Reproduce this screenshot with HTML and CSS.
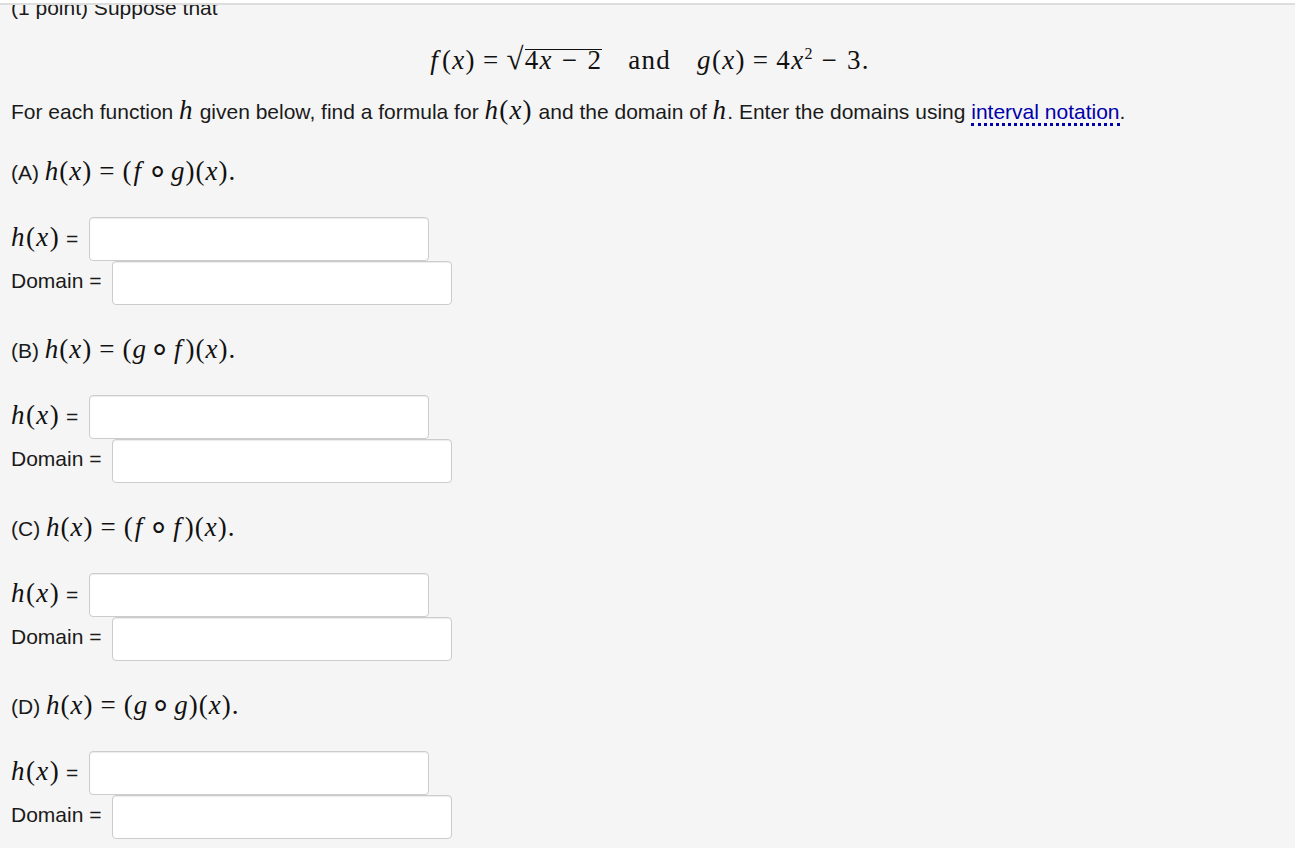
FILE: index.html
```html
<!DOCTYPE html>
<html lang="en">
<head>
    <meta charset="UTF-8">
    <title>Problem</title>
    <link rel="stylesheet" href="styles.css">
</head>
<body>
<div class="problem">
    <p class="intro">(1 point) Suppose that</p>
    <p class="display">
        <span class="math"><i class="f">f</i>(<i>x</i>)<span class="rel">=</span><span class="root"><span class="surd">√</span><span class="radicand">4<i>x</i><span class="bin">−</span>2</span></span></span>
        <span class="math">and</span>
        <span class="math"><i>g</i>(<i>x</i>)<span class="rel">=</span>4<i>x</i><sup>2</sup><span class="bin">−</span>3.</span>
    </p>
    <p class="task">For each function <span class="math"><i>h</i></span> given below, find a formula for <span class="math"><i>h</i>(<i>x</i>)</span> and the domain of <span class="math"><i>h</i></span>. Enter the domains using <a class="knowl" href="#">interval notation</a>.</p>

    <div class="part">
        <p class="question">(A) <span class="math"><i>h</i>(<i>x</i>)<span class="rel">=</span>(<i class="f">f</i><span class="compose">∘</span><i>g</i>)(<i>x</i>).</span></p>
        <div class="answer"><span class="math"><i>h</i>(<i>x</i>)</span> = <input class="field" type="text"></div>
        <div class="answer">Domain = <input class="field" type="text"></div>
    </div>
    <div class="part">
        <p class="question">(B) <span class="math"><i>h</i>(<i>x</i>)<span class="rel">=</span>(<i>g</i><span class="compose">∘</span><i class="f">f</i>)(<i>x</i>).</span></p>
        <div class="answer"><span class="math"><i>h</i>(<i>x</i>)</span> = <input class="field" type="text"></div>
        <div class="answer">Domain = <input class="field" type="text"></div>
    </div>
    <div class="part">
        <p class="question">(C) <span class="math"><i>h</i>(<i>x</i>)<span class="rel">=</span>(<i class="f">f</i><span class="compose">∘</span><i class="f">f</i>)(<i>x</i>).</span></p>
        <div class="answer"><span class="math"><i>h</i>(<i>x</i>)</span> = <input class="field" type="text"></div>
        <div class="answer">Domain = <input class="field" type="text"></div>
    </div>
    <div class="part">
        <p class="question">(D) <span class="math"><i>h</i>(<i>x</i>)<span class="rel">=</span>(<i>g</i><span class="compose">∘</span><i>g</i>)(<i>x</i>).</span></p>
        <div class="answer"><span class="math"><i>h</i>(<i>x</i>)</span> = <input class="field" type="text"></div>
        <div class="answer">Domain = <input class="field" type="text"></div>
    </div>
</div>
</body>
</html>
```

FILE: styles.css
```css
html, body {
    margin: 0;
    height: 848px;
    overflow: hidden;
    background-color: #fff;
}
body {
    padding-top: 3px;
    box-sizing: border-box;
}
p {
    margin: 0;
}
.problem {
    height: 845px;
    overflow: hidden;
    box-sizing: border-box;
    border-top: 2px solid #ddd;
    background-color: #f5f5f5;
    padding: 0 11px;
    font-family: "Liberation Sans", Arial, sans-serif;
    font-size: 21px;
    color: #1a1a1a;
}
.intro {
    line-height: 24px;
    margin-top: -9px;
}
.math {
    font-family: "Liberation Serif", "Times New Roman", serif;
    font-size: 27px;
    letter-spacing: 1.2px;
    color: #111;
}
.f {
    padding: 0 3px 0 1px;
}
.rel {
    margin: 0 7px;
}
.bin {
    margin: 0 5px;
}
.compose {
    margin: 0 2px;
    font-size: 34px;
    line-height: 0;
    vertical-align: -2px;
}
.display {
    display: flex;
    justify-content: center;
    gap: 26px;
    height: 40px;
    margin-top: 20px;
    line-height: 40px;
    padding-left: 4px;
}
.display .math {
    letter-spacing: 1.3px;
}
.display .rel {
    margin: 0 7px;
}
.display .bin {
    margin: 0 9px;
}
.root {
    white-space: nowrap;
}
.surd {
    font-size: 31px;
    line-height: 0;
}
.radicand {
    display: inline-block;
    line-height: 20px;
    border-top: 1px solid #111;
}
sup {
    font-size: 16px;
    line-height: 0;
    letter-spacing: 0;
}
.task {
    line-height: 32px;
    margin-top: 14px;
}
.knowl {
    color: #0000aa;
    text-decoration: none;
    border-bottom: 3px dotted #0000aa;
}
.part {
    height: 178px;
}
.part:first-of-type {
    margin-top: 28px;
}
.question {
    line-height: 30px;
    height: 61px;
}
.question .math {
    letter-spacing: 1px;
}
.answer {
    height: 44px;
    line-height: 40px;
    white-space: nowrap;
}
.answer .math {
    letter-spacing: 1.4px;
}
.field {
    box-sizing: border-box;
    width: 340px;
    height: 44px;
    margin-left: 5px;
    padding: 4px 6px;
    vertical-align: top;
    background-color: #fff;
    border: 1px solid #ccc;
    border-radius: 4px;
    box-shadow: inset 0 1px 1px rgba(0, 0, 0, 0.075);
}
```
